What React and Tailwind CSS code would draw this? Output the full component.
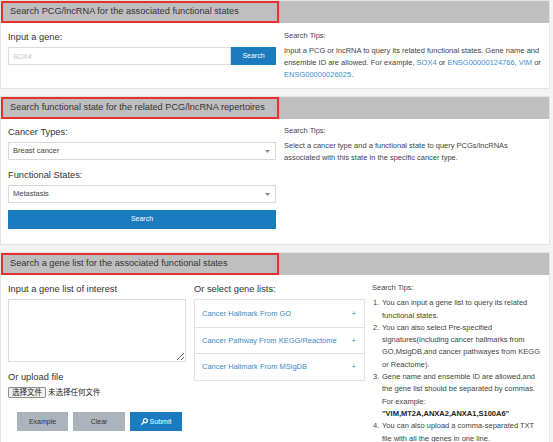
import { useState } from 'react';

const font = "font-['Liberation_Sans','Noto_Sans_CJK_SC',Arial,sans-serif]";

function PanelHeader({ title }) {
  return (
    <div className="h-[22px] bg-[#bfbfbf]">
      <div className="flex h-full w-[278px] items-center border-2 border-[#e8302f] pl-[7px] text-[9.2px] text-[#333]">
        {title}
      </div>
    </div>
  );
}

function Tips({ children }) {
  return (
    <div className="text-[7.5px] leading-[12px] text-[#444]">
      <div className="mb-[3px]">Search Tips:</div>
      {children}
    </div>
  );
}

function Caret() {
  return (
    <svg width="5" height="3" viewBox="0 0 5 3" className="fill-[#888]">
      <path d="M0 0h5L2.5 3z" />
    </svg>
  );
}

function FakeSelect({ value }) {
  return (
    <div className="flex h-[18px] items-center justify-between border border-[#d9d9d9] bg-white pl-[4px] pr-[5px] text-[7.5px] text-[#444]">
      <span>{value}</span>
      <Caret />
    </div>
  );
}

function SearchIcon() {
  return (
    <svg width="7" height="7" viewBox="0 0 10 10" fill="none" stroke="white" strokeWidth="1.8">
      <circle cx="6.2" cy="3.8" r="2.8" />
      <path d="M4.2 5.8L1 9" strokeLinecap="round" />
    </svg>
  );
}

const geneLists = ['Cancer Hallmark From GO', 'Cancer Pathway From KEGG/Reactome', 'Cancer Hallmark From MSigDB'];

export default function App() {
  const [gene, setGene] = useState('');
  const [geneList, setGeneList] = useState('');

  return (
    <div className={`min-h-[442px] bg-[#f3f3f3] pr-[3px] ${font}`}>
      {/* Single gene search */}
      <section className="mb-[7px] border border-[#e3e3e3] bg-white">
        <PanelHeader title="Search PCG/lncRNA for the associated functional states" />
        <div className="flex h-[65px]">
          <div className="w-[282px] pl-[7px] pr-[7px] pt-[7px]">
            <div className="mb-[3px] text-[9.3px] leading-[14px] text-[#333]">Input a gene:</div>
            <div className="flex h-[18px]">
              <input
                value={gene}
                onChange={(e) => setGene(e.target.value)}
                placeholder="SOX4"
                className="h-full min-w-0 flex-1 border border-[#dcdcdc] px-[4px] text-[7px] outline-none placeholder:text-[#c4c4c4]"
              />
              <button className="h-full w-[45px] bg-[#1a7bbf] text-[7px] text-white">Search</button>
            </div>
          </div>
          <div className="flex-1 pl-[1px] pt-[7px]">
            <Tips>
              <div className="whitespace-nowrap">Input a PCG or lncRNA to query its related functional states. Gene name and</div>
              <div className="whitespace-nowrap">
                ensemble ID are allowed. For example, <span className="text-[#3d8fd1]">SOX4</span> or{' '}
                <span className="text-[#3d8fd1]">ENSG00000124766</span>, <span className="text-[#3d8fd1]">VIM</span> or
              </div>
              <div className="text-[#3d8fd1]">ENSG00000026025<span className="text-[#444]">.</span></div>
            </Tips>
          </div>
        </div>
      </section>

      {/* Cancer type / functional state search */}
      <section className="mb-[7px] border border-[#e3e3e3] bg-white">
        <PanelHeader title="Search functional state for the related PCG/lncRNA repertoires" />
        <div className="flex h-[125px]">
          <div className="w-[282px] px-[7px] pt-[6px]">
            <div className="mb-[3px] text-[9.3px] leading-[14px] text-[#333]">Cancer Types:</div>
            <FakeSelect value="Breast cancer" />
            <div className="mb-[3px] mt-[8px] text-[9.3px] leading-[14px] text-[#333]">Functional States:</div>
            <FakeSelect value="Metastasis" />
            <button className="mt-[7px] h-[19px] w-full bg-[#1a7bbf] text-[7px] text-white">Search</button>
          </div>
          <div className="flex-1 pl-[1px] pt-[6px]">
            <Tips>
              <div className="whitespace-nowrap">Select a cancer type and a functional state to query PCGs/lncRNAs</div>
              <div className="whitespace-nowrap">associated with this state in the specific cancer type.</div>
            </Tips>
          </div>
        </div>
      </section>

      {/* Gene list search */}
      <section className="border border-[#e3e3e3] bg-white">
        <PanelHeader title="Search a gene list for the associated functional states" />
        <div className="flex pb-[12px] pl-[7px]">
          <div className="w-[178px] pt-[7px]">
            <div className="mb-[3px] text-[9.3px] leading-[14px] text-[#333]">Input a gene list of interest</div>
            <textarea
              value={geneList}
              onChange={(e) => setGeneList(e.target.value)}
              className="block h-[63px] w-full border border-[#dcdcdc] text-[7.5px] outline-none"
            />
            <div className="mt-[8px] text-[9.3px] leading-[14px] text-[#333]">Or upload file</div>
            <div className="mt-[3px] flex items-center text-[7.5px] text-[#222]">
              <span className="flex h-[11px] items-center rounded-[1px] border border-[#8f8f8f] bg-[#efefef] px-[3px]">选择文件</span>
              <span className="ml-[2px]">未选择任何文件</span>
            </div>
            <div className="ml-[9px] mt-[14px] flex gap-[5px] text-[7px]">
              <button className="h-[19px] w-[51px] bg-[#adb3bd] text-[#333]">Example</button>
              <button className="h-[19px] w-[52px] bg-[#adb3bd] text-[#333]">Clear</button>
              <button className="flex h-[19px] w-[52px] items-center justify-center gap-[2px] bg-[#1a7bbf] text-white">
                <SearchIcon />
                Submit
              </button>
            </div>
          </div>

          <div className="ml-[8px] w-[171px] pt-[7px]">
            <div className="mb-[3px] text-[9.3px] leading-[14px] text-[#333]">Or select gene lists:</div>
            <div className="border border-[#e3e3e3]">
              {geneLists.map((name, i) => (
                <div
                  key={name}
                  className={`flex h-[26.5px] items-center justify-between pl-[7px] pr-[8px] text-[7.5px] text-[#3d8ac6] ${i > 0 ? 'border-t border-[#e3e3e3]' : ''}`}
                >
                  <span>{name}</span>
                  <span>+</span>
                </div>
              ))}
            </div>
          </div>

          <div className="ml-[7px] flex-1 pt-[7px] text-[7.5px] leading-[12.3px] text-[#444]">
            <div className="mb-[3px]">Search Tips:</div>
            <ol className="ml-[1px]">
              <li className="flex"><span className="w-[9px] shrink-0">1.</span><span>You can input a gene list to query its related<br />functional states.</span></li>
              <li className="flex"><span className="w-[9px] shrink-0">2.</span><span>You can also select Pre-specified<br />signatures(including cancer hallmarks from<br />GO,MsigDB,and cancer pathwayes from KEGG<br />or Reactome).</span></li>
              <li className="flex"><span className="w-[9px] shrink-0">3.</span><span className="whitespace-nowrap">Gene name and ensemble ID are allowed,and<br />the gene list should be separated by commas.<br />For example:<br /><b className="text-[#222]">"VIM,MT2A,ANXA2,ANXA1,S100A6"</b></span></li>
              <li className="flex"><span className="w-[9px] shrink-0">4.</span><span>You can also upload a comma-separated TXT<br />file with all the genes in one line.</span></li>
            </ol>
          </div>
        </div>
      </section>
    </div>
  );
}
